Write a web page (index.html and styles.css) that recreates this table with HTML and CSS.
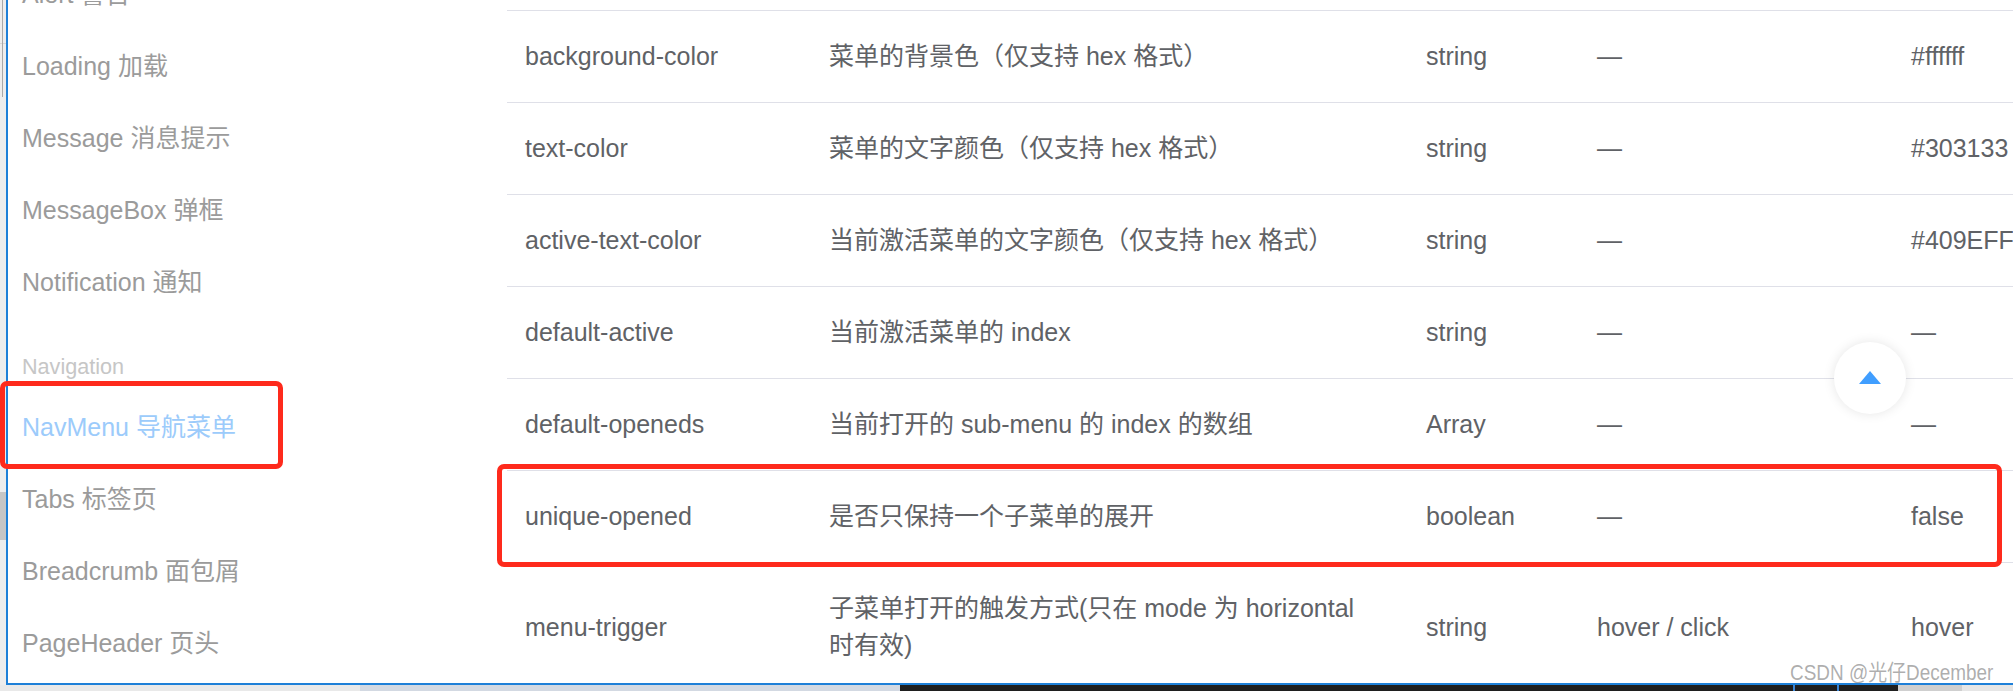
FILE: index.html
```html
<!DOCTYPE html>
<html lang="zh-CN">
<head>
<meta charset="utf-8">
<title>NavMenu 导航菜单</title>
<link rel="stylesheet" href="styles.css">
</head>
<body>
<div class="screen">
  <div class="desk">
    <div class="left-strip"></div>
    <div class="window">
      <nav class="sidebar">
        <ul class="nav-list">
          <li class="nav-item">Alert 警告</li>
          <li class="nav-item">Loading 加载</li>
          <li class="nav-item">Message 消息提示</li>
          <li class="nav-item">MessageBox 弹框</li>
          <li class="nav-item">Notification 通知</li>
          <li class="nav-group">Navigation</li>
          <li class="nav-item active">NavMenu 导航菜单</li>
          <li class="nav-item">Tabs 标签页</li>
          <li class="nav-item">Breadcrumb 面包屑</li>
          <li class="nav-item">PageHeader 页头</li>
        </ul>
      </nav>
      <main class="content">
        <div class="prev-row"></div>
        <table class="attr-table">
          <colgroup>
            <col class="c-name"><col class="c-desc"><col class="c-type"><col class="c-opts"><col class="c-def">
          </colgroup>
          <tbody>
            <tr><td>background-color</td><td>菜单的背景色（仅支持 hex 格式）</td><td>string</td><td>—</td><td>#ffffff</td></tr>
            <tr><td>text-color</td><td>菜单的文字颜色（仅支持 hex 格式）</td><td>string</td><td>—</td><td>#303133</td></tr>
            <tr><td>active-text-color</td><td>当前激活菜单的文字颜色（仅支持 hex 格式）</td><td>string</td><td>—</td><td>#409EFF</td></tr>
            <tr><td>default-active</td><td>当前激活菜单的 index</td><td>string</td><td>—</td><td>—</td></tr>
            <tr><td>default-openeds</td><td>当前打开的 sub-menu 的 index 的数组</td><td>Array</td><td>—</td><td>—</td></tr>
            <tr><td>unique-opened</td><td>是否只保持一个子菜单的展开</td><td>boolean</td><td>—</td><td>false</td></tr>
            <tr><td>menu-trigger</td><td>子菜单打开的触发方式(只在 mode 为 horizontal<br>时有效)</td><td>string</td><td>hover / click</td><td>hover</td></tr>
          </tbody>
        </table>
      </main>
    </div>
  </div>
  <div class="taskbar"></div>

  <div class="mark mark-nav"></div>
  <div class="mark mark-row"></div>
  <button class="back-top" aria-label="回到顶部">
    <svg width="22" height="13" viewBox="0 0 22 13"><polygon points="11,0 22,13 0,13" fill="#409eff"/></svg>
  </button>
  <div class="watermark">CSDN @光仔December</div>
</div>
</body>
</html>
```

FILE: styles.css
```css
* { box-sizing: border-box; }
html, body {
  margin: 0;
  padding: 0;
  background: #ffffff;
  overflow: hidden;
}
body {
  font-family: "Liberation Sans", "Noto Sans CJK SC", sans-serif;
}
.screen {
  position: relative;
  width: 2013px;
  height: 691px;
  display: flex;
  flex-direction: column;
  overflow: hidden;
}
.desk {
  display: flex;
  height: 685px;
}
.left-strip {
  width: 6px;
  flex: none;
  background:
    linear-gradient(#a9a9a9, #a9a9a9) 2px 0 / 1px 97px no-repeat,
    linear-gradient(#d6d6d6, #d6d6d6) 0 43px / 6px 1px no-repeat,
    linear-gradient(#c6c6c6, #c6c6c6) 0 492px / 6px 48px no-repeat,
    #ededed;
}
.window {
  flex: 1;
  display: flex;
  border-left: 2px solid #1e80d8;
  border-bottom: 2px solid #1e80d8;
  background: #fff;
  overflow: hidden;
}
.sidebar {
  width: 499px;
  flex: none;
  overflow: hidden;
}
.nav-list {
  list-style: none;
  margin: -42px 0 0 0;
  padding: 0;
}
.nav-item {
  height: 72px;
  line-height: 72px;
  padding-left: 14px;
  font-size: 25px;
  color: #9b9b9b;
  white-space: nowrap;
}
.nav-item.active {
  color: #9ccbfb;
}
.nav-group {
  padding: 37px 0 12px 14px;
  line-height: 24px;
  font-size: 21.6px;
  color: #c6c6c6;
}
.content {
  flex: 1;
  overflow: hidden;
}
.prev-row {
  height: 11px;
  border-bottom: 1px solid #dfe0e8;
  width: 1800px;
}
.attr-table {
  border-collapse: collapse;
  table-layout: fixed;
  width: 1677px;
  font-size: 25px;
  color: #606266;
}
.c-name { width: 295px; }
.c-desc { width: 597px; }
.c-type { width: 171px; }
.c-opts { width: 314px; }
.c-def { width: 300px; }
.attr-table td {
  padding: 27px 27px;
  line-height: 37px;
  border-bottom: 1px solid #dfe0e8;
  vertical-align: middle;
  white-space: nowrap;
}
.attr-table td:first-child {
  padding-left: 18px;
}
.taskbar {
  height: 6px;
  background:
    linear-gradient(#3a86d6, #3a86d6) 1793px 0 / 2px 6px no-repeat,
    linear-gradient(#3a86d6, #3a86d6) 1837px 0 / 2px 6px no-repeat,
    linear-gradient(to right,
      #e9e9e9 0 360px,
      #d3d9e2 360px 900px,
      #1f1f1f 900px 1898px,
      #cfcfcf 1898px 1962px,
      #e6e6e6 1962px);
}
.mark {
  position: absolute;
  border: 5px solid #fe2a1c;
  border-radius: 7px;
  pointer-events: none;
}
.mark-nav {
  left: 0;
  top: 381px;
  width: 283px;
  height: 88px;
}
.mark-row {
  left: 497px;
  top: 464px;
  width: 1505px;
  height: 103px;
}
.back-top {
  position: absolute;
  left: 1834px;
  top: 342px;
  width: 72px;
  height: 72px;
  border: 0;
  padding: 0;
  border-radius: 50%;
  background: #fff;
  box-shadow: 0 0 12px rgba(0, 0, 0, 0.1);
  display: flex;
  align-items: center;
  justify-content: center;
}
.back-top svg {
  display: block;
  margin-top: -2px;
}
.watermark {
  position: absolute;
  right: 20px;
  top: 659px;
  font-family: "Liberation Sans", "Noto Sans CJK SC", sans-serif;
  font-size: 22px;
  line-height: 28px;
  color: rgba(120, 120, 120, 0.6);
  white-space: nowrap;
  transform: scaleX(0.86);
  transform-origin: right center;
}
```
